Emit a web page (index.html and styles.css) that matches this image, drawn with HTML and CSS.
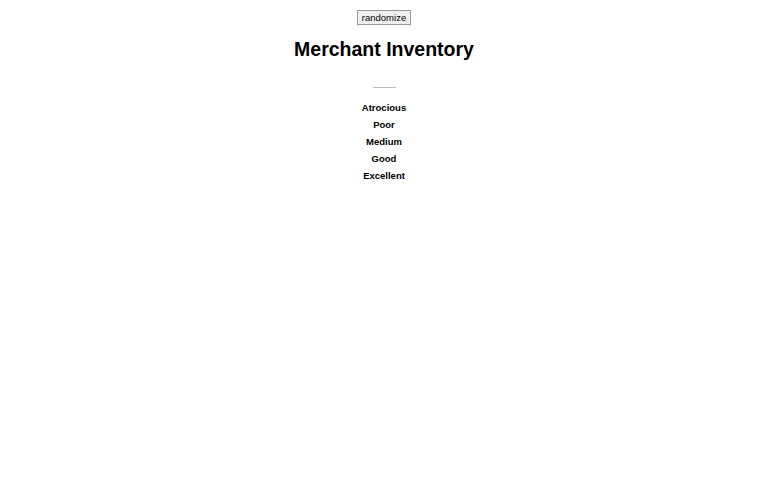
FILE: index.html
```html
<!DOCTYPE html>
<html>
<head>
<meta charset="utf-8">
<title>Merchant Inventory</title>
<link rel="stylesheet" href="styles.css">
</head>
<body>
<div class="app">
  <button class="randomize">randomize</button>
  <h1 class="title">Merchant Inventory</h1>
  <div class="rule"></div>
  <ul class="grades">
    <li>Atrocious</li>
    <li>Poor</li>
    <li>Medium</li>
    <li>Good</li>
    <li>Excellent</li>
  </ul>
</div>
</body>
</html>
```
FILE: styles.css
```css
body {
  margin: 8px;
  font-family: "Liberation Sans", Arial, sans-serif;
  background: #fff;
  color: #000;
}
.app {
  display: flex;
  flex-direction: column;
  align-items: center;
}
.randomize {
  margin-top: 2px;
  font-family: "Liberation Sans", Arial, sans-serif;
  font-size: 9.5px;
  line-height: 11px;
  padding: 1px 4px;
  background: #efefef;
  border: 1px solid #9a9a9a;
  border-radius: 0;
  color: #000;
}
.title {
  font-size: 19.5px;
  font-weight: bold;
  margin: 13px 0 0;
}
.rule {
  width: 23px;
  height: 1px;
  background: #bbb;
  margin-top: 26px;
}
.grades {
  list-style: none;
  margin: 11px 0 0;
  padding: 0;
  text-align: center;
}
.grades li {
  font-size: 9.5px;
  font-weight: bold;
  line-height: 17px;
}
```
